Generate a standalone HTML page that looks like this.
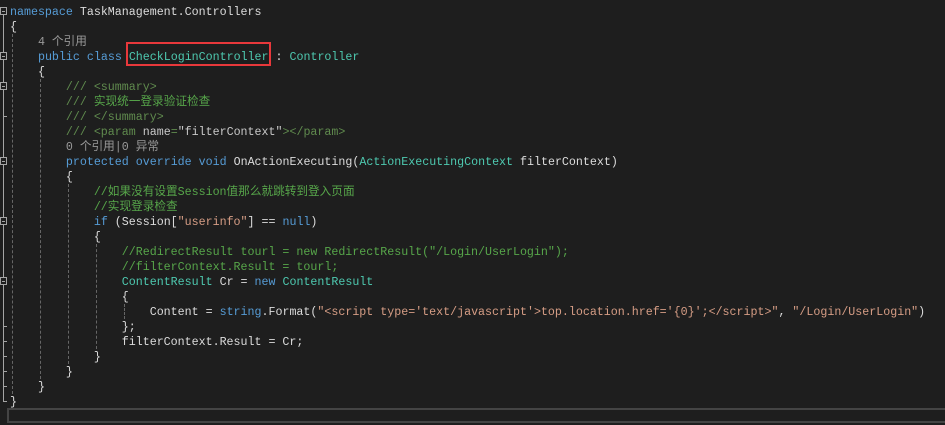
<!DOCTYPE html>
<html><head><meta charset="utf-8"><style>
body{margin:0;width:945px;height:425px;background:#1e1e1e;overflow:hidden;position:relative;font-family:"Liberation Mono","Noto Sans CJK SC",monospace;font-size:11.65px;color:#dcdcdc}
.l{position:absolute;left:10px;white-space:pre;height:15px;line-height:15px;margin-top:1px}
.k{color:#569cd6}.t{color:#4ec9b0}.c{color:#57a64a}.d{color:#608b4e}.s{color:#d69d85}.g{color:#999}.x{color:#c8c8c8}
.f{position:absolute;left:0;width:7px;height:8px;border:1px solid #a5a5a5;box-sizing:border-box;background:#1e1e1e}
.f:after{content:"";position:absolute;left:1px;top:3px;width:3px;height:1px;background:#a5a5a5}
.v{position:absolute;width:0;border-left:1px dashed #666}
.tk{position:absolute;left:3px;width:4px;height:1px;background:#a5a5a5}
</style></head><body>
<div style="position:absolute;left:3px;top:15px;width:1px;height:387px;background:#a5a5a5"></div>
<div class="tk" style="top:401px"></div><div class="tk" style="top:386px"></div><div class="tk" style="top:371px"></div><div class="tk" style="top:356px"></div><div class="tk" style="top:341px"></div><div class="tk" style="top:326px"></div><div class="tk" style="top:116px"></div>
<div class="f" style="top:7px"></div><div class="f" style="top:52px"></div><div class="f" style="top:82px"></div><div class="f" style="top:157px"></div><div class="f" style="top:217px"></div><div class="f" style="top:277px"></div>
<div class="v" style="left:12px;top:34px;height:360px"></div>
<div class="v" style="left:40px;top:79px;height:300px"></div>
<div class="v" style="left:68px;top:184px;height:180px"></div>
<div class="v" style="left:96px;top:244px;height:105px"></div>
<div class="v" style="left:124px;top:304px;height:15px"></div>
<div class="l" style="top:4px"><span class="k">namespace</span> TaskManagement.Controllers</div>
<div class="l" style="top:19px">{</div>
<div class="l g" style="top:34px">    4 个引用</div>
<div class="l" style="top:49px">    <span class="k">public</span> <span class="k">class</span> <span class="t">CheckLoginController</span> : <span class="t">Controller</span></div>
<div class="l" style="top:64px">    {</div>
<div class="l d" style="top:79px">        /// &lt;summary&gt;</div>
<div class="l c" style="top:94px">        <span class="d">///</span> 实现统一登录验证检查</div>
<div class="l d" style="top:109px">        /// &lt;/summary&gt;</div>
<div class="l d" style="top:124px">        /// &lt;param <span class="x">name</span>=<span class="x">"filterContext"</span>&gt;&lt;/param&gt;</div>
<div class="l g" style="top:139px">        0 个引用|0 异常</div>
<div class="l" style="top:154px">        <span class="k">protected</span> <span class="k">override</span> <span class="k">void</span> OnActionExecuting(<span class="t">ActionExecutingContext</span> filterContext)</div>
<div class="l" style="top:169px">        {</div>
<div class="l c" style="top:184px">            //如果没有设置Session值那么就跳转到登入页面</div>
<div class="l c" style="top:199px">            //实现登录检查</div>
<div class="l" style="top:214px">            <span class="k">if</span> (Session[<span class="s">"userinfo"</span>] == <span class="k">null</span>)</div>
<div class="l" style="top:229px">            {</div>
<div class="l c" style="top:244px">                //RedirectResult tourl = new RedirectResult("/Login/UserLogin");</div>
<div class="l c" style="top:259px">                //filterContext.Result = tourl;</div>
<div class="l" style="top:274px">                <span class="t">ContentResult</span> Cr = <span class="k">new</span> <span class="t">ContentResult</span></div>
<div class="l" style="top:289px">                {</div>
<div class="l" style="top:304px">                    Content = <span class="k">string</span>.Format(<span class="s">"&lt;script type='text/javascript'&gt;top.location.href='{0}';&lt;/script&gt;"</span>, <span class="s">"/Login/UserLogin"</span>)</div>
<div class="l" style="top:319px">                };</div>
<div class="l" style="top:334px">                filterContext.Result = Cr;</div>
<div class="l" style="top:349px">            }</div>
<div class="l" style="top:364px">        }</div>
<div class="l" style="top:379px">    }</div>
<div class="l" style="top:394px">}</div>
<div style="position:absolute;left:126px;top:42px;width:145px;height:24px;border:2px solid #e8383b;box-sizing:border-box"></div>
<div style="position:absolute;left:7px;top:408px;width:950px;height:15px;border:2px solid #444;box-sizing:border-box"></div>
</body></html>
